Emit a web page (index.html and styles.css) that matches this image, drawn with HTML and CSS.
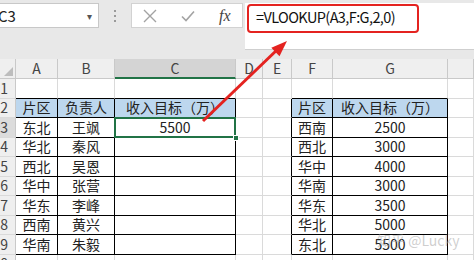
FILE: index.html
```html
<!DOCTYPE html>
<html lang="zh-CN">
<head>
    <meta charset="UTF-8">
    <meta name="viewport" content="width=device-width, initial-scale=1.0">
    <title>VLOOKUP 示例</title>
    <link rel="stylesheet" href="styles.css">
</head>
<body>
    <div class="formula-bar">
        <div class="name-box">C3<span class="drop">&#9662;</span></div>
        <div class="grip"><i></i><i></i><i></i></div>
        <div class="fx-box">
            <svg class="icon" width="14" height="14" viewBox="0 0 14 14"><path d="M1 1 L13 13 M13 1 L1 13" stroke="#a3a3a3" stroke-width="1.4" fill="none"/></svg>
            <svg class="icon" width="14" height="14" viewBox="0 0 14 14"><path d="M1 7.5 L5 11.5 L13 2.5" stroke="#a3a3a3" stroke-width="1.6" fill="none"/></svg>
            <span class="fx">fx</span>
        </div>
        <div class="formula">
            <div class="formula-text">=VLOOKUP(A3,F:G,2,0)</div>
        </div>
    </div>

    <table class="sheet">
        <colgroup>
            <col class="w-rh"><col class="w-a"><col class="w-b"><col class="w-c"><col class="w-d">
            <col class="w-e"><col class="w-f"><col class="w-g"><col class="w-h">
        </colgroup>
        <tr class="col-head">
            <th class="corner"><span class="tri"></span></th>
            <th>A</th><th>B</th><th class="sel">C</th><th>D</th><th>E</th><th>F</th><th>G</th><th></th>
        </tr>
        <tr>
            <th class="row-head">1</th>
            <td class="top"></td><td class="top"></td><td class="top"></td><td></td><td></td>
            <td class="top"></td><td class="top"></td><td></td>
        </tr>
        <tr>
            <th class="row-head edge">2</th>
            <td class="box hd">片区</td><td class="box hd">负责人</td><td class="box hd">收入目标（万）</td>
            <td></td><td class="edge"></td>
            <td class="box hd">片区</td><td class="box hd">收入目标（万）</td><td></td>
        </tr>
        <tr>
            <th class="row-head edge sel">3</th>
            <td class="box">东北</td><td class="box">王飒</td>
            <td class="box active">5500<span class="cursor"><span class="handle"></span></span></td>
            <td></td><td class="edge"></td>
            <td class="box">西南</td><td class="box">2500</td><td></td>
        </tr>
        <tr>
            <th class="row-head edge">4</th>
            <td class="box">华北</td><td class="box">秦风</td><td class="box"></td>
            <td></td><td class="edge"></td>
            <td class="box">西北</td><td class="box">3000</td><td></td>
        </tr>
        <tr>
            <th class="row-head edge">5</th>
            <td class="box">西北</td><td class="box">吴恩</td><td class="box"></td>
            <td></td><td class="edge"></td>
            <td class="box">华中</td><td class="box">4000</td><td></td>
        </tr>
        <tr>
            <th class="row-head edge">6</th>
            <td class="box">华中</td><td class="box">张营</td><td class="box"></td>
            <td></td><td class="edge"></td>
            <td class="box">华南</td><td class="box">3000</td><td></td>
        </tr>
        <tr>
            <th class="row-head edge">7</th>
            <td class="box">华东</td><td class="box">李峰</td><td class="box"></td>
            <td></td><td class="edge"></td>
            <td class="box">华东</td><td class="box">3500</td><td></td>
        </tr>
        <tr>
            <th class="row-head edge">8</th>
            <td class="box">西南</td><td class="box">黄兴</td><td class="box"></td>
            <td></td><td class="edge"></td>
            <td class="box">华北</td><td class="box">5000</td><td></td>
        </tr>
        <tr>
            <th class="row-head edge">9</th>
            <td class="box">华南</td><td class="box">朱毅</td><td class="box"></td>
            <td></td><td class="edge"></td>
            <td class="box">东北</td><td class="box">5500</td><td></td>
        </tr>
        <tr class="last">
            <th class="row-head">10</th>
            <td></td><td></td><td></td><td></td><td></td><td></td><td></td><td></td>
        </tr>
    </table>

    <!-- callout arrow from the result cell to the formula -->
    <svg class="arrow" width="474" height="260" viewBox="0 0 474 260">
        <line x1="203" y1="121" x2="279" y2="48" stroke="#e42320" stroke-width="3"/>
        <polygon points="287,41 279.5,56.3 271.3,47.7" fill="#e42320"/>
    </svg>

    <div class="watermark">知乎 @Lucky</div>
</body>
</html>
```
FILE: styles.css
```css
* {
    box-sizing: border-box;
}
body {
    margin: 0;
    width: 474px;
    height: 260px;
    overflow: hidden;
    position: relative;
    background: #e8e8e8;
    font-family: "Noto Sans CJK SC", "Noto Sans", sans-serif;
    color: #222;
}

/* formula bar */
.formula-bar {
    display: flex;
    align-items: flex-start;
    height: 59px;
    padding-top: 3px;
}
.name-box {
    width: 99px;
    height: 25px;
    background: #fff;
    border: 1px solid #c8c8c8;
    border-left: none;
    font-size: 15px;
    line-height: 23px;
    text-indent: -2px;
    position: relative;
}
.drop {
    position: absolute;
    right: 6px;
    top: 0;
    font-size: 10px;
    color: #555;
}
.grip {
    width: 32px;
    height: 25px;
    display: flex;
    flex-direction: column;
    align-items: center;
    justify-content: center;
    gap: 3px;
}
.grip i {
    width: 2px;
    height: 2px;
    background: #9a9a9a;
}
.fx-box {
    width: 112px;
    height: 25px;
    background: #fff;
    border: 1px solid #d2d2d2;
    display: flex;
    align-items: center;
    padding-left: 11px;
    gap: 24px;
}
.fx {
    font-family: "Liberation Serif", serif;
    font-style: italic;
    font-size: 16px;
    color: #444;
}
.formula {
    flex: 1;
    height: 47px;
    margin-left: 2px;
    background: #fff;
    border-bottom: 1px solid #cfcfcf;
    padding: 1px 0 0 2px;
}
.formula-text {
    width: 172px;
    height: 29px;
    border: 2.5px solid #e42320;
    border-radius: 4px;
    padding-left: 7px;
    font-size: 14.5px;
    letter-spacing: -0.6px;
    line-height: 22px;
    color: #111;
}

/* worksheet grid */
.sheet {
    table-layout: fixed;
    border-collapse: separate;
    border-spacing: 0;
    width: 474px;
    background: #fff;
    font-size: 14px;
}
.w-rh { width: 16px; }
.w-a { width: 42px; }
.w-b { width: 57px; }
.w-c { width: 121px; }
.w-d { width: 27px; }
.w-e { width: 29px; }
.w-f { width: 41px; }
.w-g { width: 115px; }
.w-h { width: 26px; }
.sheet tr {
    height: 19.5px;
}
.sheet .last {
    height: 5px;
}
.sheet td,
.sheet th {
    padding: 0;
    border-right: 1px solid #dadada;
    border-bottom: 1px solid #dadada;
    text-align: center;
    font-weight: normal;
    white-space: nowrap;
    overflow: hidden;
    line-height: 17px;
}
.sheet .last td,
.sheet .last th {
    vertical-align: top;
    line-height: 17px;
}
.sheet .col-head {
    height: 20px;
}
.col-head th {
    background: #efefef;
    color: #444;
    border-right-color: #c9c9c9;
    border-bottom-color: #c9c9c9;
}
.col-head th.sel {
    background: #d4d4d4;
    border-bottom: 2px solid #217346;
}
.corner {
    position: relative;
}
.tri {
    position: absolute;
    right: 2px;
    bottom: 2px;
    border-left: 9px solid transparent;
    border-bottom: 9px solid #bdbdbd;
}
.row-head {
    background: #efefef;
    color: #444;
    text-align: right !important;
    padding-right: 8px !important;
    overflow: visible !important;
    border-right-color: #c9c9c9 !important;
    direction: rtl;
}
.row-head.sel {
    background: #dcdcdc;
}
.sheet .top {
    border-bottom-color: #000;
}
.sheet .edge {
    border-right-color: #000;
}
.sheet .box {
    border-right-color: #000;
    border-bottom-color: #000;
}
.sheet .hd {
    background: #bdd7ee;
}
.active {
    position: relative;
    overflow: visible !important;
}
.cursor {
    position: absolute;
    top: -1px;
    left: -1px;
    right: -1px;
    bottom: -1px;
    border: 2px solid #217346;
}
.handle {
    position: absolute;
    right: -5px;
    bottom: -5px;
    width: 6px;
    height: 6px;
    background: #217346;
    border: 1px solid #fff;
}

/* overlays */
.arrow {
    position: absolute;
    top: 0;
    left: 0;
    pointer-events: none;
}
.watermark {
    position: absolute;
    left: 377px;
    top: 230px;
    font-size: 14px;
    color: rgba(160, 160, 160, 0.5);
    white-space: nowrap;
}
```
